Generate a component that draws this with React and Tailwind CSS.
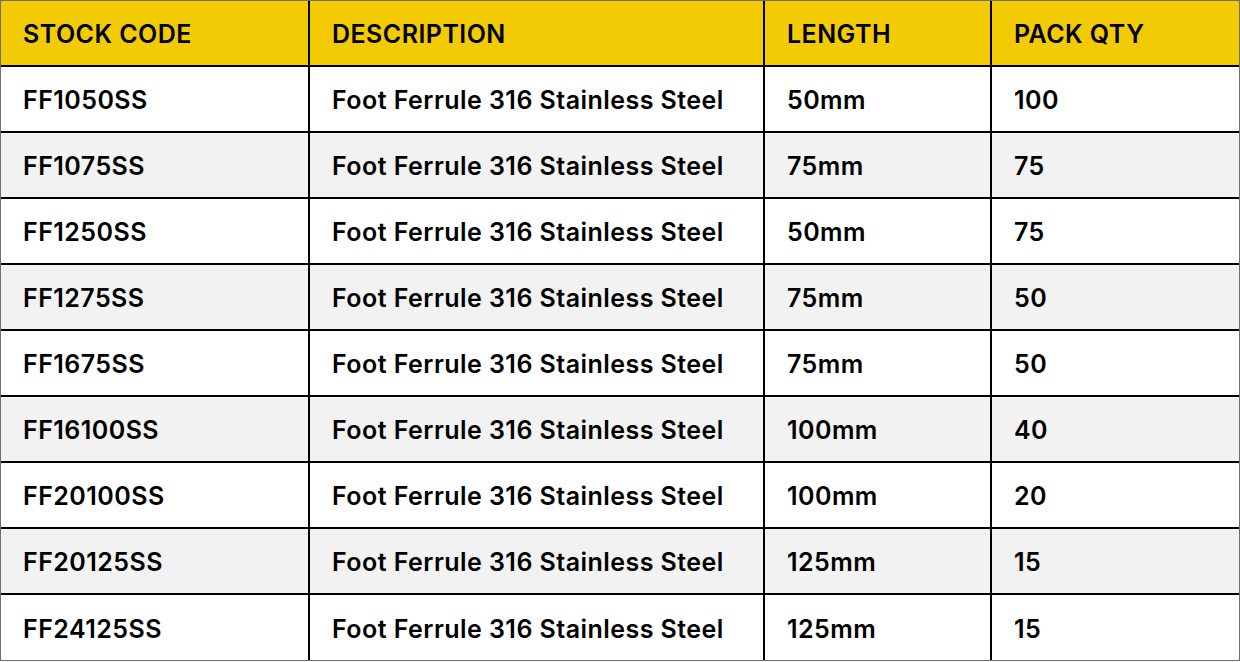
const rows = [
  ['FF1050SS', 'Foot Ferrule 316 Stainless Steel', '50mm', '100'],
  ['FF1075SS', 'Foot Ferrule 316 Stainless Steel', '75mm', '75'],
  ['FF1250SS', 'Foot Ferrule 316 Stainless Steel', '50mm', '75'],
  ['FF1275SS', 'Foot Ferrule 316 Stainless Steel', '75mm', '50'],
  ['FF1675SS', 'Foot Ferrule 316 Stainless Steel', '75mm', '50'],
  ['FF16100SS', 'Foot Ferrule 316 Stainless Steel', '100mm', '40'],
  ['FF20100SS', 'Foot Ferrule 316 Stainless Steel', '100mm', '20'],
  ['FF20125SS', 'Foot Ferrule 316 Stainless Steel', '125mm', '15'],
  ['FF24125SS', 'Foot Ferrule 316 Stainless Steel', '125mm', '15'],
]

const headers = ['STOCK CODE', 'DESCRIPTION', 'LENGTH', 'PACK QTY']

export default function App() {
  return (
    <div className="w-[1240px] bg-white font-['Inter',sans-serif] text-[25px] font-semibold tracking-[0.45px] text-black">
      <div className="border border-[#6f6f6f]">
        <table className="w-full table-fixed border-collapse">
          <colgroup>
            <col className="w-[308px]" />
            <col className="w-[455px]" />
            <col className="w-[227px]" />
            <col />
          </colgroup>
          <thead>
            <tr className="h-[65px] bg-[#f2cb05]">
              {headers.map((h, i) => (
                <th
                  key={h}
                  className={`px-[22px] pt-[4px] text-left font-semibold ${i > 0 ? 'border-l-2 border-black' : ''}`}
                >
                  {h}
                </th>
              ))}
            </tr>
          </thead>
          <tbody>
            {rows.map((r, idx) => (
              <tr key={r[0]} className={`h-[66px] border-t-2 border-black ${idx % 2 ? 'bg-[#f2f2f2]' : 'bg-white'}`}>
                {r.map((c, i) => (
                  <td key={i} className={`px-[22px] pt-[4px] ${i > 0 ? 'border-l-2 border-black' : ''}`}>
                    {c}
                  </td>
                ))}
              </tr>
            ))}
          </tbody>
        </table>
      </div>
    </div>
  )
}
